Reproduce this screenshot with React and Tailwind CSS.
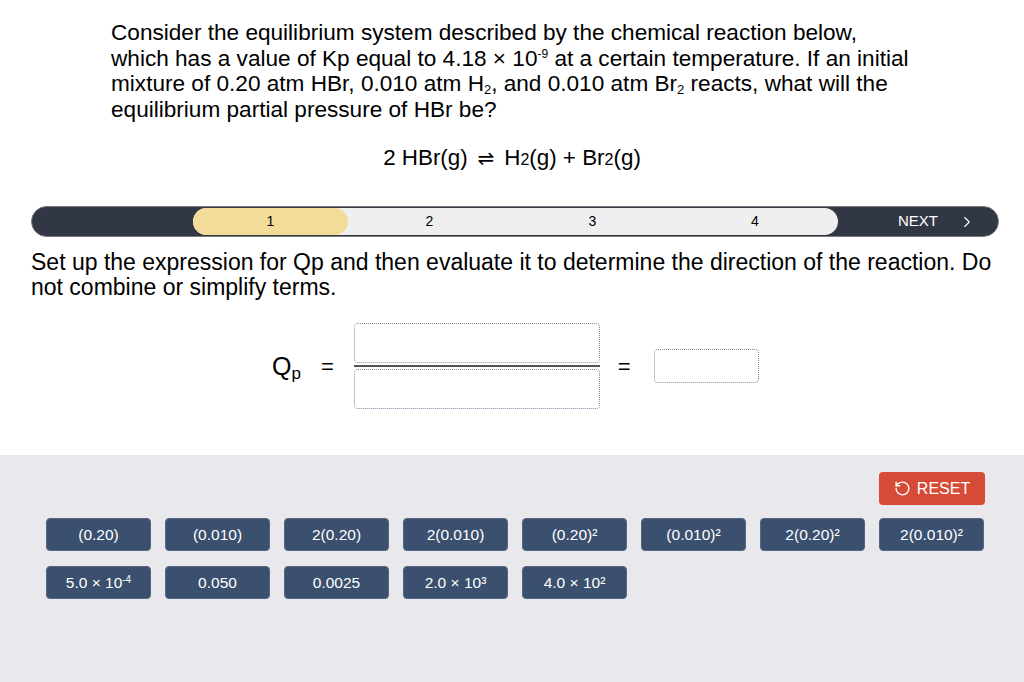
import { ChevronRight, RotateCcw } from 'lucide-react';

const row1 = [
  <>(0.20)</>,
  <>(0.010)</>,
  <>2(0.20)</>,
  <>2(0.010)</>,
  <>(0.20)²</>,
  <>(0.010)²</>,
  <>2(0.20)²</>,
  <>2(0.010)²</>,
];

const row2 = [
  <>5.0 × 10<sup className="text-[10px] relative -top-[5px]">-4</sup></>,
  <>0.050</>,
  <>0.0025</>,
  <>2.0 × 10³</>,
  <>4.0 × 10²</>,
];

const Tile = ({ children }) => (
  <button className="w-[105px] h-[33px] rounded-[4px] bg-[#3b4f6e] border border-[#56667f] text-white text-[15.5px] flex items-center justify-center">
    <span>{children}</span>
  </button>
);

const App = () => {
  return (
    <div className="w-[1024px] h-[682px] bg-white flex flex-col text-black overflow-hidden" style={{ fontFamily: '"Liberation Sans", Arial, sans-serif' }}>
      {/* Question */}
      <div className="pl-[111px] pt-[20px]">
        <p className="text-[22.6px] leading-[25.5px] whitespace-nowrap">
          Consider the equilibrium system described by the chemical reaction below,
          <br />
          which has a value of Kp equal to 4.18 × 10
          <sup className="text-[12px] relative -top-[8px]">-9</sup> at a certain temperature. If an initial
          <br />
          mixture of 0.20 atm HBr, 0.010 atm H<sub className="text-[13px]">2</sub>, and 0.010 atm Br<sub className="text-[13px]">2</sub> reacts, what will the
          <br />
          equilibrium partial pressure of HBr be?
        </p>
      </div>

      {/* Reaction */}
      <div className="mt-[23px] text-[22.4px] leading-[25px] text-center">
        2 HBr(g) <span className="inline-block w-[24px] text-[20px]" style={{ fontFamily: '"DejaVu Sans", sans-serif' }}>⇌</span> H<span className="text-[16px]">2</span>(g) + Br<span className="text-[16px]">2</span>(g)
      </div>

      {/* Step bar */}
      <div className="mt-[34px] ml-[31px] mr-[25px] h-[31px] rounded-full bg-[#323745] border border-[#7a7a7a] flex items-center">
        <div className="w-[161px]" />
        <div className="w-[645px] h-[27px] rounded-full bg-[#efefef] flex items-center text-[14px]">
          <div className="w-[155px] h-full rounded-full bg-[#f2dc98] flex items-center justify-center">1</div>
          <div className="w-[163px] text-center">2</div>
          <div className="w-[163px] text-center">3</div>
          <div className="w-[162px] text-center">4</div>
        </div>
        <div className="flex-1 flex items-center justify-end pr-[22px] gap-[20px] text-white text-[15px]">
          <span>NEXT</span>
          <ChevronRight size={18} strokeWidth={1.5} />
        </div>
      </div>

      {/* Instruction */}
      <p className="mt-[13px] px-[31px] text-[23px] leading-[25px]">
        Set up the expression for Qp and then evaluate it to determine the direction of the reaction. Do not combine or simplify terms.
      </p>

      {/* Qp expression */}
      <div className="mt-[22px] flex items-center pl-[272px] h-[88px]">
        <div className="text-[25px] leading-none">
          Q<span className="text-[17px] relative top-[4px]">p</span>
        </div>
        <div className="ml-[20px] text-[22px]">=</div>
        <div className="ml-[20px] flex flex-col items-stretch w-[246px]">
          <div className="h-[40px] rounded-[4px] border border-dotted border-[#7d8ba3]" />
          <div className="my-[2px] h-[2px] bg-[#555]" />
          <div className="h-[40px] rounded-[4px] border border-dotted border-[#7d8ba3]" />
        </div>
        <div className="ml-[18px] text-[22px]">=</div>
        <div className="ml-[23px] w-[105px] h-[34px] rounded-[4px] border border-dotted border-[#7d8ba3]" />
      </div>

      {/* Answer tiles */}
      <div className="mt-[45px] flex-1 bg-[#e9e8ed] pl-[46px] pt-[17px]">
        <div className="w-[939px] flex justify-end">
          <button className="w-[106px] h-[33px] rounded-[4px] bg-[#d64b36] text-white text-[16px] flex items-center justify-center gap-[6px]">
            <RotateCcw size={17} strokeWidth={2} />
            RESET
          </button>
        </div>
        <div className="mt-[13px] flex gap-[14px]">
          {row1.map((c, i) => (
            <Tile key={i}>{c}</Tile>
          ))}
        </div>
        <div className="mt-[15px] flex gap-[14px]">
          {row2.map((c, i) => (
            <Tile key={i}>{c}</Tile>
          ))}
        </div>
      </div>
    </div>
  );
};

export default App;
